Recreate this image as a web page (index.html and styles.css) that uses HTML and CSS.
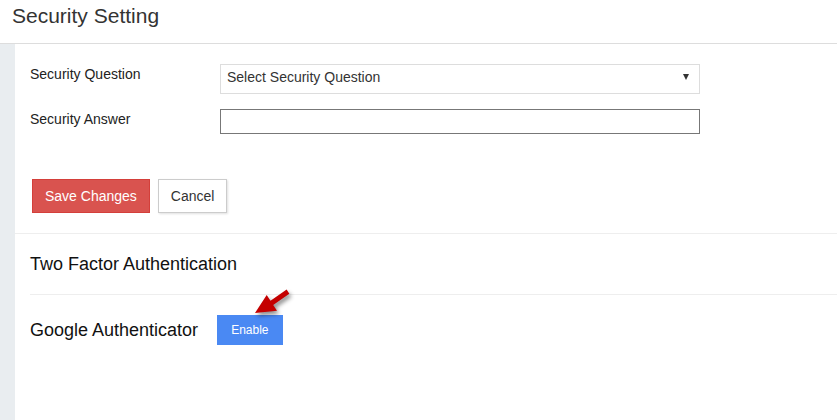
FILE: index.html
```html
<!DOCTYPE html>
<html lang="en">
<head>
<meta charset="utf-8">
<title>Security Setting</title>
<link rel="stylesheet" href="styles.css">
</head>
<body>
<header class="page-header">
  <h1 class="page-title">Security Setting</h1>
</header>
<div class="layout">
  <aside class="sidebar"></aside>
  <main class="content">
    <form class="form">
      <div class="field">
        <label class="label">Security Question</label>
        <div class="select"><span>Select Security Question</span><span class="caret"></span></div>
      </div>
      <div class="field">
        <label class="label">Security Answer</label>
        <input class="input" type="text">
      </div>
      <div class="actions">
        <button type="button" class="btn btn-danger">Save Changes</button>
        <button type="button" class="btn btn-default">Cancel</button>
      </div>
    </form>
    <section class="tfa">
      <h2 class="tfa-title">Two Factor Authentication</h2>
      <div class="tfa-row">
        <span class="tfa-name">Google Authenticator</span>
        <span class="enable-wrap">
          <button type="button" class="btn btn-primary">Enable</button>
          <svg class="pointer" width="45" height="34" viewBox="0 0 45 34">
            <polygon points="5,27 16.7,9 20.5,14.75 36.65,3.6 39.35,7.8 23.2,18.95 27,24.7" fill="#c40000"/>
          </svg>
        </span>
      </div>
    </section>
  </main>
</div>
</body>
</html>
```
FILE: styles.css
```css
html, body {
  margin: 0;
  height: 100%;
}
body {
  font-family: "Liberation Sans", Arial, sans-serif;
  background: #fff;
  color: #333;
}
.page-header {
  border-bottom: 1px solid #ddd;
  padding: 4px 12px 0;
  box-sizing: border-box;
  height: 44px;
}
.page-title {
  margin: 0;
  font-size: 21px;
  font-weight: normal;
  line-height: 24px;
  color: #333;
}
.layout {
  display: flex;
  height: calc(100% - 44px);
}
.sidebar {
  width: 15px;
  flex: none;
  background: #e9edf0;
}
.content {
  flex: 1;
}
.form {
  padding: 20px 0 20px 15px;
  border-bottom: 1px solid #eee;
  margin: 0;
  display: flex;
  flex-direction: column;
}
.field {
  display: grid;
  grid-template-columns: 190px 480px;
  align-items: start;
  margin-bottom: 15px;
}
.label {
  font-size: 14px;
  line-height: 20px;
  color: #222;
}
.select {
  height: 30px;
  box-sizing: border-box;
  border: 1px solid #ddd;
  display: flex;
  align-items: center;
  justify-content: space-between;
  padding: 0 10px 5px 6px;
  font-size: 14px;
  color: #333;
}
.caret {
  width: 0;
  height: 0;
  border-left: 3.5px solid transparent;
  border-right: 3.5px solid transparent;
  border-top: 6px solid #333;
}
.input {
  height: 25px;
  box-sizing: border-box;
  border: 1px solid #777;
  margin: 0;
  padding: 0 6px;
  font: inherit;
}
.actions {
  display: flex;
  gap: 8px;
  margin-top: 30px;
  padding-left: 2px;
}
.btn {
  font-family: "Liberation Sans", Arial, sans-serif;
  font-size: 14px;
  height: 34px;
  padding: 0 12px;
  border: 1px solid transparent;
  border-radius: 0;
  cursor: pointer;
  margin: 0;
}
.btn-danger {
  background: #d9534f;
  border-color: #d43f3a;
  color: #fff;
}
.btn-default {
  background: #fff;
  border-color: #ccc;
  color: #333;
  box-shadow: 1px 1px 2px rgba(0, 0, 0, 0.12);
}
.tfa {
  padding-left: 15px;
}
.tfa-title {
  margin: 0;
  padding: 20px 0;
  font-size: 18px;
  font-weight: normal;
  line-height: 20px;
  color: #111;
  border-bottom: 1px solid #eee;
}
.tfa-row {
  display: flex;
  align-items: center;
  gap: 19px;
  padding-top: 20px;
}
.tfa-name {
  font-size: 18px;
  line-height: 20px;
  color: #111;
}
.enable-wrap {
  position: relative;
  display: inline-flex;
}
.btn-primary {
  height: 30px;
  padding: 0 14px;
  font-size: 12px;
  border: none;
  background: #4a89f3;
  color: #fff;
}
.pointer {
  position: absolute;
  left: 33px;
  top: -29px;
  overflow: visible;
  filter: drop-shadow(2px 3px 2px rgba(0, 0, 0, 0.45));
}
```
